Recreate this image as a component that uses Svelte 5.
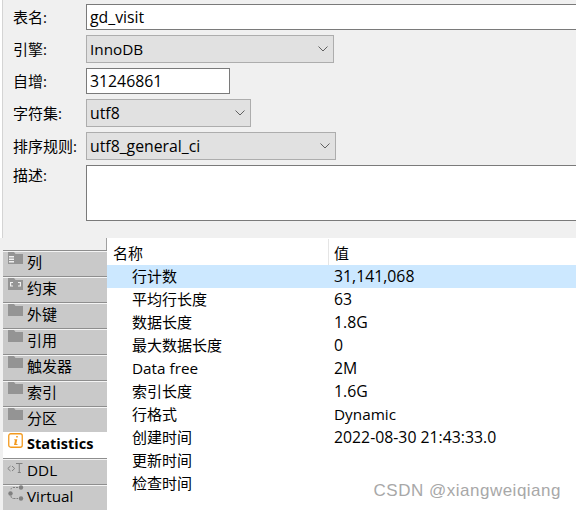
<script>
  const tabs = [
    { label: '列', icon: 'cols' },
    { label: '约束', icon: 'cons' },
    { label: '外键', icon: 'folder' },
    { label: '引用', icon: 'folder' },
    { label: '触发器', icon: 'folder' },
    { label: '索引', icon: 'folder' },
    { label: '分区', icon: 'folder' },
    { label: 'Statistics', icon: 'info', active: true },
    { label: 'DDL', icon: 'ddl', latin: true },
    { label: 'Virtual', icon: 'virtual', latin: true }
  ];
  const rows = [
    { name: '行计数', value: '31,141,068', sel: true },
    { name: '平均行长度', value: '63' },
    { name: '数据长度', value: '1.8G' },
    { name: '最大数据长度', value: '0' },
    { name: 'Data free', value: '2M', latin: true },
    { name: '索引长度', value: '1.6G' },
    { name: '行格式', value: 'Dynamic', word: true },
    { name: '创建时间', value: '2022-08-30 21:43:33.0' },
    { name: '更新时间', value: '' },
    { name: '检查时间', value: '' }
  ];
</script>

<div class="app">
  <div class="form">
    <div class="field"><span class="lbl">表名:</span><div class="input grow"><span class="num">gd_visit</span></div></div>
    <div class="field"><span class="lbl">引擎:</span><div class="select w248"><span class="word">InnoDB</span><svg class="chev" viewBox="0 0 10 6"><path d="M.5.5 5 5 9.500.5" /></svg></div></div>
    <div class="field"><span class="lbl">自增:</span><div class="input w144"><span class="num">31246861</span></div></div>
    <div class="field"><span class="lbl">字符集:</span><div class="select w165"><span class="num">utf8</span><svg class="chev" viewBox="0 0 10 6"><path d="M.5.5 5 5 9.500.5" /></svg></div></div>
    <div class="field"><span class="lbl">排序规则:</span><div class="select w250"><span class="num">utf8_general_ci</span><svg class="chev" viewBox="0 0 10 6"><path d="M.5.5 5 5 9.500.5" /></svg></div></div>
    <div class="field desc"><span class="lbl">描述:</span><div class="textarea grow"></div></div>
  </div>

  <div class="bottom">
    <div class="tabs">
      {#each tabs as t}
        <div class="tab" class:active={t.active}>
          <span class="ico {t.icon}">
            {#if t.icon === 'folder' || t.icon === 'cols' || t.icon === 'cons'}
              <svg viewBox="0 0 15 12" width="15" height="12">
                <path d="M0 0h6l1.500 2H15v10H0z" fill="#949494" />
                {#if t.icon === 'cols'}
                  <path d="M1 4h5v1.500H1zM1 6.500h5V8H1zM1 9h5v1.500H1z" fill="#f0f0f0" />
                {:else if t.icon === 'cons'}
                  <path d="M2 4h3v1H3.200v2.500H5v1H2zM13 4h-3v1h1.800v2.500H10v1h3z" fill="#f0f0f0" />
                {/if}
              </svg>
            {:else if t.icon === 'info'}
              <svg viewBox="0 0 15 15" width="15" height="15">
                <rect x=".75" y=".75" width="13.500" height="13.500" rx="2" fill="#fff" stroke="#f39a1e" stroke-width="1.300" />
                <path d="M8.200 3h1.600v1.600H8.200zM6.300 6.300h3l-1 4.700h1.200v1H6l1-4.700H6.200z" fill="#f39a1e" />
              </svg>
            {:else if t.icon === 'ddl'}
              <svg viewBox="0 0 16 10" width="16" height="10" fill="none" stroke="#808080" stroke-width="1">
                <path d="M3.500 3 .8 5.500 3.500 8M5 3l2.700 2.500L5 8M9 .5h6.500M12.250.5V9.500M10.800 9.500h3" />
              </svg>
            {:else}
              <svg viewBox="0 0 16 16" width="16" height="16" fill="none" stroke="#808080" stroke-width="1">
                <circle cx="13" cy="2.500" r="2.200" fill="#808080" stroke="none" />
                <circle cx="2.500" cy="8.500" r="2.200" fill="#808080" stroke="none" />
                <circle cx="13" cy="13.500" r="2.200" fill="#808080" stroke="none" />
                <path d="M10 2.500H5Q3 2.500 3 5M5.500 13.500H10M3 11Q3 13.500 5.500 13.500" stroke-dasharray="2 1" />
              </svg>
            {/if}
          </span>
          <span class="tlabel" class:word={t.latin}>{t.label}</span>
        </div>
      {/each}
    </div>
    <div class="grid">
      <div class="head"><div class="c1">名称</div><div class="c2">值</div></div>
      {#each rows as r}
        <div class="row" class:sel={r.sel}>
          <div class="c1 ind"><span class:word={r.latin}>{r.name}</span></div>
          <div class="c2"><span class:num={!r.word} class:word={r.word}>{r.value}</span></div>
        </div>
      {/each}
    </div>
  </div>
  <div class="mark">CSDN @xiangweiqiang</div>
</div>

<style>
  :global(body) { margin: 0; background: #fff; }
  .app {
    position: relative;
    width: 576px;
    height: 510px;
    overflow: hidden;
    font-family: "Open Sans", "Noto Sans CJK SC", sans-serif;
    font-size: 15px;
    color: #000;
    background: #fff;
  }
  .num { font-size: 15.8px; }
  .word { font-size: 15.3px; }
  .form {
    box-sizing: border-box;
    height: 238px;
    margin-left: 2px;
    padding: 4px 0 0 10px;
    background: #f0f0f0;
    border-left: 1px solid #d4d4d4;
    display: flex;
    flex-direction: column;
    gap: 5px;
  }
  .field { display: flex; align-items: center; }
  .lbl { width: 73px; flex: none; white-space: nowrap; line-height: 20px; }
  .desc { align-items: flex-start; }
  .input, .select, .textarea {
    box-sizing: border-box;
    padding-left: 3px;
    white-space: nowrap;
  }
  .input {
    height: 26px;
    line-height: 24px;
    background: #fff;
    border: 1px solid #7a7a7a;
  }
  .select {
    position: relative;
    height: 28px;
    line-height: 26px;
    background: #e1e1e1;
    border: 1px solid #adadad;
  }
  .textarea { height: 56px; background: #fff; border: 1px solid #7a7a7a; }
  .grow { flex: 1; border-right: none; }
  .w248 { width: 248px; }
  .w144 { width: 144px; }
  .w165 { width: 165px; }
  .w250 { width: 250px; }
  .chev {
    position: absolute;
    right: 5px;
    top: 10px;
    width: 10px;
    height: 6px;
    fill: none;
    stroke: #606060;
    stroke-width: 1;
  }
  .bottom { display: flex; height: 272px; }
  .tabs {
    box-sizing: border-box;
    width: 107px;
    flex: none;
    padding: 12px 0 0 3px;
    background: #f0f0f0;
    border-right: 1px solid #a0a0a0;
  }
  .tab {
    box-sizing: border-box;
    height: 26px;
    display: flex;
    align-items: flex-start;
    background: #c9c9c9;
    border-top: 1px solid #8e8e8e;
    box-shadow: inset 0 1px 0 #f4f4f4;
    margin-right: -1px;
  }
  .tab.active {
    background: #fff;
    border-top-color: #fff;
    box-shadow: none;
    font-weight: 700;
    font-size: 14.5px;
    position: relative;
  }
  .ico {
    box-sizing: border-box;
    width: 24px;
    flex: none;
    display: flex;
    padding-left: 5px;
    margin-top: 1px;
  }
  .ico.info { margin-top: 0; }
  .ico.ddl { margin-top: 4px; padding-left: 4px; }
  .ico.virtual { margin-top: 0; padding-left: 5px; }
  .tlabel { line-height: 22px; white-space: nowrap; }
  .active .tlabel { line-height: 21px; }
  .grid { flex: 1; background: #fff; padding-top: 1px; }
  .head, .row { display: flex; }
  .head { height: 26px; line-height: 26px; }
  .head .c1, .head .c2 { padding-top: 1px; box-sizing: border-box; height: 26px; }
  .row { height: 23px; line-height: 23px; }
  .sel { background: #cce8ff; }
  .c1 { box-sizing: border-box; width: 222px; padding-left: 6px; white-space: nowrap; }
  .ind { padding-left: 25px; }
  .c2 { padding-left: 5px; white-space: nowrap; }
  .head .c1 { border-right: 1px solid #e5e5e5; }
  .mark {
    position: absolute;
    right: 15px;
    bottom: 9px;
    font-family: "Liberation Sans", sans-serif;
    font-size: 17px;
    letter-spacing: .5px;
    color: #a8a8a8;
  }
</style>
